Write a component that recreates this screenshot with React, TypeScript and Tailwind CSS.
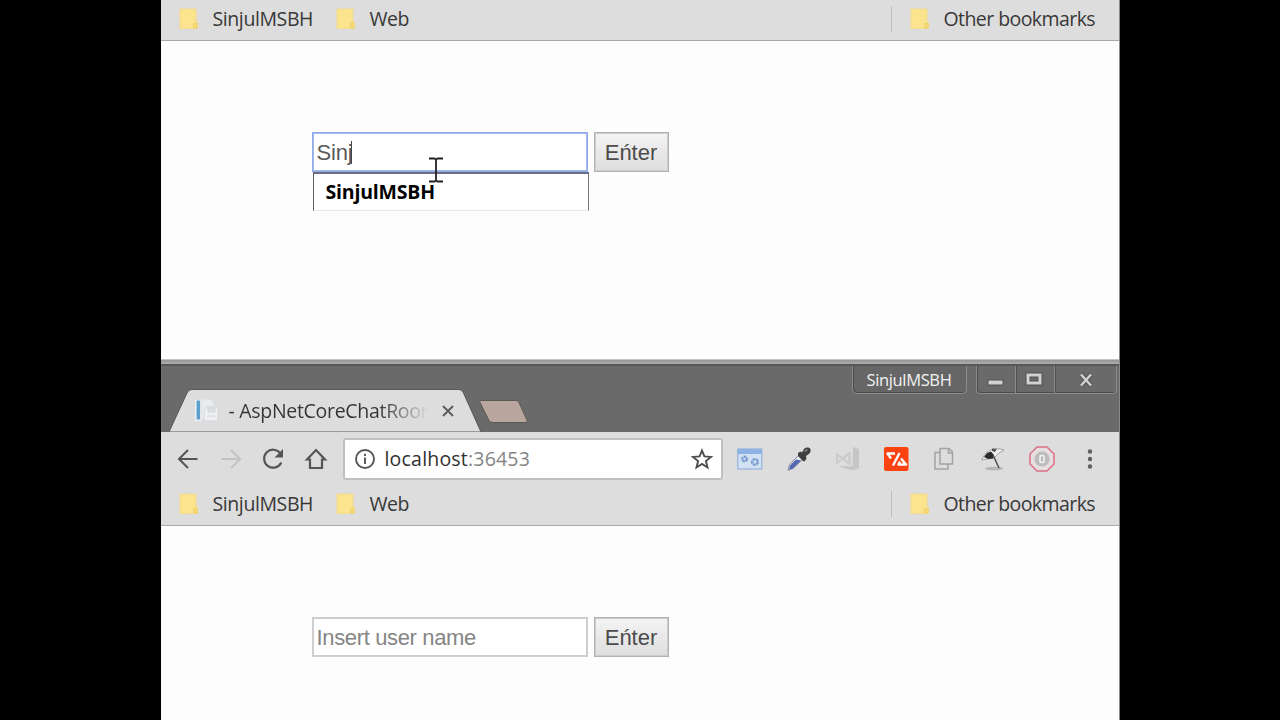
import React from 'react';

interface BookmarkProps {
  label: string;
  className?: string;
}

interface LoginFormProps {
  value?: string;
  suggestion?: string;
}

const FolderIcon: React.FC = () => (
  <svg width="22" height="24" viewBox="0 0 22 24" className="shrink-0">
    <path d="M2 2h16v13h1.500v6.500H2z" fill="#fce38e" stroke="#efdb92" strokeWidth="1.200" />
    <path d="M15.500 21v-4.500h3.500V21z" fill="#f9dc78" stroke="#ebcd68" strokeWidth=".8" />
  </svg>
);

const Bookmark: React.FC<BookmarkProps> = ({ label, className = '' }) => (
  <div className="flex items-center">
    <FolderIcon />
    <span className={`ml-[13px] whitespace-nowrap leading-6 ${className}`}>{label}</span>
  </div>
);

const BookmarksBar: React.FC = () => (
  <div className="flex h-[41px] shrink-0 items-center border-b border-[#a8a8a8] bg-[#dddddd] pb-[3px] pl-[17px] pr-[23px] font-['Open_Sans',sans-serif] text-[19.500px] text-[#383838]">
    <Bookmark label="SinjulMSBH" className="w-[122px] tracking-[-0.4px]" />
    <Bookmark label="Web" className="tracking-[-0.5px]" />
    <div className="ml-auto h-[26px] w-px bg-[#bdbdbd]" />
    <div className="ml-[17px]">
      <Bookmark label="Other bookmarks" className="w-[152px] tracking-[-0.57px]" />
    </div>
  </div>
);

const LoginForm: React.FC<LoginFormProps> = ({ value, suggestion }) => (
  <div className="relative flex gap-[6px] pl-[151px] pt-[91px] font-['Liberation_Sans',Arial,sans-serif] text-[22px]">
    <div
      className={`flex h-10 w-[276px] items-center border bg-white pl-[4px] ${
        value
          ? 'border-[#8fabe8] text-[#5a5a5a] shadow-[inset_0_0_0_1px_#a3b9ea]'
          : 'border-[#cfcfcf] text-[#858585] shadow-[inset_0_0_0_1px_#cdcdcd]'
      }`}
    >
      <span className={value ? 'whitespace-nowrap tracking-[-0.2px]' : 'whitespace-nowrap tracking-[-0.35px]'}>
        {value ?? 'Insert user name'}
      </span>
      {value && <span className="-ml-px h-[23px] w-px bg-[#444]" />}
    </div>
    <button className="h-10 w-[75px] border border-[#b2b2b2] bg-linear-to-b from-[#f4f4f4] to-[#dedede] text-[#4c4c4c] shadow-[inset_0_0_0_1px_#cccccc]">
      Eńter
    </button>
    {suggestion && (
      <div className="absolute left-[152px] top-[131px] flex h-[39px] w-[276px] items-center border border-t-2 border-b-[#e6e6e6] border-l-[#5d5d68] border-r-[#77777f] border-t-[#6d6d88] bg-white pl-[12px] font-['Open_Sans',sans-serif] text-[19.500px] font-bold tracking-[-0.2px] text-black">
        {suggestion}
      </div>
    )}
  </div>
);

const TextCursor: React.FC = () => (
  <svg width="16" height="26" viewBox="0 0 16 26" className="absolute left-[267px] top-[157px]">
    <path d="M1 1.500h5.500l1.500 1 1.500-1H15M8 2.500v21M1 24.500h5.500l1.500-1 1.500 1H15" stroke="#222" strokeWidth="1.800" fill="none" />
  </svg>
);

const TitleBar: React.FC = () => (
  <div className="flex h-[66px] shrink-0 items-start bg-[#6a6a6a] font-['Open_Sans',sans-serif]">
    <div className="relative ml-[8px] mt-[23px] h-[43px] w-[313px]">
      <svg width="313" height="43" className="absolute inset-0">
        <path d="M0 43 L18 4 Q19.500 .5 23 .5 H290 Q293 .5 294.500 4 L312 43z" fill="#dddddd" stroke="#575757" strokeWidth="1" />
      </svg>
      <div className="relative flex h-[43px] items-center pl-[25px]">
        <svg width="25" height="25" viewBox="0 0 25 25">
          <path d="M1 2h6v21H1z" fill="#f0f3f5" />
          <path d="M2.500 2.500h3.500v19H2.500z" fill="#5ba1cc" />
          <path d="M7 1h10l4 5v16H7z" fill="#e9ebee" stroke="#d8dbdf" />
          <path d="M13 9h11v14H10V12z" fill="#efeff1" stroke="#d2d5da" />
          <path d="M14 10h7v4h-7zM13 18h9" fill="#dcdfe4" stroke="#d2d5da" />
        </svg>
        <span className="ml-[10px] w-[199px] overflow-hidden whitespace-nowrap bg-linear-to-r from-[#333] from-75% to-[#dddddd] to-100% bg-clip-text text-[19.500px] leading-7 tracking-[-0.3px] text-transparent">
          - AspNetCoreChatRoom
        </span>
        <svg width="12" height="12" viewBox="0 0 12 12" className="ml-[14px]">
          <path d="M1 1l10 10M11 1L1 11" stroke="#5a5a5a" strokeWidth="1.800" />
        </svg>
      </div>
    </div>
    <svg width="52" height="26" viewBox="0 0 52 26" className="-ml-[4px] mt-[33px]">
      <path d="M3 1.500h35q2 0 3 2l8 18q1 2-1 2H15q-3 0-4-2l-9-18q-1-2 1-2z" fill="#b9a69e" stroke="#5c5854" />
    </svg>
    <div className="ml-auto flex h-[28px] w-[115px] items-center justify-center rounded-b-[5px] border border-t-0 border-[#8c8c8c] bg-[#666] pt-[2px] text-[16.500px] tracking-[-0.35px] text-[#f2f2f2] shadow-[inset_1px_-1px_0_#4b4b4b]">
      SinjulMSBH
    </div>
    <div className="ml-[9px] mr-[2px] flex h-[28px] w-[141px] rounded-b-[4px] border border-t-0 border-[#8c8c8c] shadow-[inset_1px_-1px_0_#4b4b4b]">
      <div className="flex w-[39px] items-center justify-center border-r border-[#8c8c8c]">
        <svg width="18" height="7" className="mt-[5px]">
          <rect x="1" y="1" width="15" height="5" fill="#d2d2d2" stroke="#505050" />
        </svg>
      </div>
      <div className="flex w-[39px] items-center justify-center border-l border-r border-l-[#505050] border-r-[#8c8c8c] pr-[2px]">
        <svg width="18" height="15">
          <rect x="3" y="3" width="12" height="8" fill="none" stroke="#505050" strokeWidth="5" />
          <rect x="3" y="3" width="12" height="8" fill="none" stroke="#d2d2d2" strokeWidth="3" />
        </svg>
      </div>
      <div className="flex flex-1 items-center justify-center border-l border-[#505050]">
        <svg width="16" height="14" viewBox="0 0 16 14">
          <path d="M3 1.500l10 11M13 1.500l-10 11" stroke="#505050" strokeWidth="4.500" />
          <path d="M3 1.500l10 11M13 1.500l-10 11" stroke="#d2d2d2" strokeWidth="2.600" />
        </svg>
      </div>
    </div>
  </div>
);

const NavButtons: React.FC = () => (
  <div className="flex w-[176px] gap-[18.700px] pl-[15.500px]">
    <svg width="24" height="24" viewBox="0 0 24 24" fill="none" stroke="#555" strokeWidth="2">
      <path d="M21.500 12H3.500M12 3L3 12l9 9" />
    </svg>
    <svg width="24" height="24" viewBox="0 0 24 24" fill="none" stroke="#c2c2c2" strokeWidth="2">
      <path d="M2.500 12h18M12 3l9 9-9 9" />
    </svg>
    <svg width="24" height="24" viewBox="0 0 24 24" fill="none" stroke="#555" strokeWidth="2.200">
      <path d="M19.500 6.500A9 9 0 1 0 20.300 15.500" />
      <path d="M22 2v8.500h-8.500z" fill="#555" stroke="none" />
    </svg>
    <svg width="24" height="24" viewBox="0 0 24 24" fill="none" stroke="#555" strokeWidth="2.200">
      <path d="M3 12.500L12 3l9 9.500h-3V21H6v-8.500z" />
    </svg>
  </div>
);

const AddressBar: React.FC = () => (
  <div className="flex h-[42px] w-[380px] items-center rounded-[3px] border-2 border-[#c0c0c0] bg-white pl-[9px] pr-[7px] text-[19.500px]">
    <svg width="22" height="22" viewBox="0 0 22 22" fill="none" stroke="#555" strokeWidth="1.900">
      <circle cx="11" cy="11" r="9" />
      <path d="M11 9.500v6.500M11 5.800v2.200" />
    </svg>
    <span className="ml-[9px] whitespace-nowrap tracking-[0.2px] text-[#303030]">
      localhost<span className="text-[#858585]">:36453</span>
    </span>
    <svg width="24" height="24" viewBox="0 0 24 24" className="ml-auto">
      <path d="M12 3.500l2.400 5.900 6.600.5-5.100 4.200 1.600 6.400-5.500-3.500-5.500 3.500 1.600-6.400L3 9.900l6.600-.5z" fill="none" stroke="#4e4e4e" strokeWidth="1.900" />
    </svg>
  </div>
);

const Extensions: React.FC = () => (
  <div className="flex flex-1 gap-[20.600px] pl-[13.500px]">
    <svg width="28" height="28" viewBox="0 0 28 28">
      <rect x="1.800" y="4" width="24" height="20" fill="#d3e2f3" stroke="#86a9da" />
      <rect x="2" y="4" width="24" height="5" fill="#8fb2e5" />
      <circle cx="8.500" cy="14" r="2.300" fill="none" stroke="#7b9fcf" strokeWidth="2.600" strokeDasharray="2.400 .6" />
      <circle cx="19" cy="17" r="2.800" fill="none" stroke="#7b9fcf" strokeWidth="2.600" strokeDasharray="2.800 .7" />
    </svg>
    <svg width="28" height="28" viewBox="0 0 28 28">
      <path d="M15 9l4 4L8 23.500l-5 2 1.500-6z" fill="#e6e8f0" stroke="#8c90a0" />
      <path d="M11 14.500l5 1-8 8-4 1 1-4z" fill="#5367b3" />
      <path d="M13 8l2.500-1.500 1.500 1 2-3.500c4-3.500 9-.5 5.500 4.500L21 11l.5 2.500-2 3-1.500-.5-5-5z" fill="#3f3f3f" />
      <path d="M19.500 6.500l3-2" stroke="#8a8a8a" strokeWidth="1.500" />
    </svg>
    <svg width="28" height="28" viewBox="0 0 28 28">
      <path d="M20 2l6 2v19l-6 2.500L7.500 22v-1l12 .5z" fill="#c6c6c6" />
      <path d="M16.500 8v11L10 13.500zM10 13.500L4 17.500v-8z" fill="none" stroke="#cacaca" strokeWidth="2" />
    </svg>
    <svg width="28" height="28" viewBox="0 0 28 28">
      <rect x="2" y="2" width="24.500" height="24" rx="2" fill="#fb4311" />
      <path d="M13 8.500H5.500l3.500 5M17.500 8l-6.500 12.500M19 13.500l5 6h-7.500l1.500-3" fill="none" stroke="#fff" strokeWidth="2.400" strokeLinejoin="round" />
    </svg>
    <svg width="28" height="28" viewBox="0 0 28 28" fill="none" stroke="#a2a2a2" strokeWidth="1.500">
      <path d="M10 3.500h9l3.500 3.500V19H10zM18.500 4v4h4" />
      <path d="M10 7.500H5v16.500h13v-5" />
    </svg>
    <svg width="28" height="28" viewBox="0 0 28 28">
      <ellipse cx="15" cy="23.500" rx="9" ry="1.800" fill="#b4b4b4" />
      <path d="M3 15C5 7 14 1 25 5l-5 3-5 5-7 1z" fill="#f0f0f0" stroke="#888" strokeWidth=".7" />
      <path d="M5 12l3-4 4-1.500 3 3.500-1 3.500-5 .5z" fill="#2c2c2c" />
      <path d="M13 3.500l5 .5-2 3-3-1z" fill="#555" />
      <path d="M14.500 11l5.500 12" stroke="#555" strokeWidth="1.600" />
    </svg>
    <svg width="28" height="28" viewBox="0 0 28 28">
      <path d="M9 2h10l7 7v10l-7 7H9l-7-7V9z" fill="#e6dfe0" stroke="#dc6f86" strokeWidth="1.500" />
      <circle cx="14" cy="14" r="7.500" fill="#bcbcbc" />
      <rect x="12" y="10.500" width="4" height="7" rx="1" fill="#bcbcbc" stroke="#f5f5f5" strokeWidth="1.500" />
    </svg>
    <svg width="28" height="28" viewBox="0 0 28 28" fill="#606060">
      <circle cx="14" cy="6.500" r="2.200" />
      <circle cx="14" cy="14" r="2.200" />
      <circle cx="14" cy="21.500" r="2.200" />
    </svg>
  </div>
);

const Toolbar: React.FC = () => (
  <div className="flex h-[53px] shrink-0 items-center bg-[#dddddd] pt-px font-['Open_Sans',sans-serif]">
    <div className="flex w-[182px]">
      <NavButtons />
    </div>
    <AddressBar />
    <Extensions />
  </div>
);

export default function App() {
  return (
    <div className="flex h-[720px] w-[1280px] justify-center overflow-hidden bg-black">
      <div className="flex w-[959px] flex-col border-r border-r-[#8a8a8a] bg-[#fdfdfd]">
        <section className="relative flex h-[359px] shrink-0 flex-col">
          <BookmarksBar />
          <LoginForm value="Sinj" suggestion="SinjulMSBH" />
          <TextCursor />
        </section>
        <section className="flex flex-1 flex-col">
          <div className="h-[7px] shrink-0 border-b-2 border-t border-b-[#575757] border-t-[#c5c5c5] bg-linear-to-b from-[#969696] to-[#adadad]" />
          <TitleBar />
          <Toolbar />
          <BookmarksBar />
          <LoginForm />
        </section>
      </div>
    </div>
  );
}
